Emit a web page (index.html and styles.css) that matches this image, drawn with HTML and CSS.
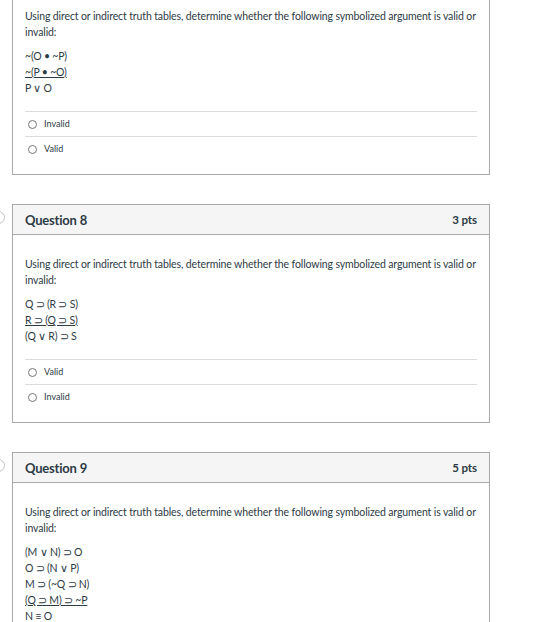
FILE: index.html
```html
<!DOCTYPE html>
<html>
<head>
<meta charset="utf-8">
<link rel="stylesheet" href="styles.css">
</head>
<body>
<div class="page">
  <div class="card card-first">
    <div class="card-body">
      <p class="prompt">Using direct or indirect truth tables, determine whether the following symbolized argument is valid or invalid:</p>
      <div class="formula">
        <div>~(O • ~P)</div>
        <div><u>~(P • ~O)</u></div>
        <div>P ∨ O</div>
      </div>
      <div class="answers">
        <label class="answer"><span class="radio"></span><span>Invalid</span></label>
        <label class="answer"><span class="radio"></span><span>Valid</span></label>
      </div>
    </div>
  </div>

  <div class="card">
    <span class="marker"></span>
    <div class="card-header">
      <span class="q-title">Question 8</span>
      <span class="q-pts">3 pts</span>
    </div>
    <div class="card-body">
      <p class="prompt">Using direct or indirect truth tables, determine whether the following symbolized argument is valid or invalid:</p>
      <div class="formula">
        <div>Q ⊃ (R ⊃ S)</div>
        <div><u>R ⊃ (Q ⊃ S)</u></div>
        <div>(Q ∨ R) ⊃ S</div>
      </div>
      <div class="answers">
        <label class="answer"><span class="radio"></span><span>Valid</span></label>
        <label class="answer"><span class="radio"></span><span>Invalid</span></label>
      </div>
    </div>
  </div>

  <div class="card">
    <span class="marker"></span>
    <div class="card-header">
      <span class="q-title">Question 9</span>
      <span class="q-pts">5 pts</span>
    </div>
    <div class="card-body">
      <p class="prompt">Using direct or indirect truth tables, determine whether the following symbolized argument is valid or invalid:</p>
      <div class="formula">
        <div>(M ∨ N) ⊃ O</div>
        <div>O ⊃ (N ∨ P)</div>
        <div>M ⊃ (~Q ⊃ N)</div>
        <div><u>(Q ⊃ M) ⊃ ~P</u></div>
        <div>N ≡ O</div>
      </div>
    </div>
  </div>
</div>
</body>
</html>
```

FILE: styles.css
```css
html, body {
  margin: 0;
  padding: 0;
  background: #fff;
}
body {
  font-family: Lato, "Liberation Sans", sans-serif;
  color: #2d3b45;
  overflow: hidden;
}
.page {
  padding: 0 53px 0 12px;
}
.card {
  position: relative;
  border: 1px solid #a9a9a9;
  background: #fff;
  margin-bottom: 29px;
}
.card-first {
  margin-top: -14px;
}
.marker {
  position: absolute;
  left: -21px;
  top: 6px;
  width: 11px;
  height: 11px;
  border: 1px solid #c4c4c4;
  border-radius: 50%;
  background: #fff;
}
.card-header {
  height: 29px;
  background: #f5f5f5;
  border-bottom: 1px solid #a9a9a9;
  display: flex;
  align-items: center;
  justify-content: space-between;
  padding: 0 12px;
}
.q-title {
  font-size: 13px;
  font-weight: 700;
  letter-spacing: -0.2px;
}
.q-pts {
  font-size: 11.5px;
  font-weight: 700;
  letter-spacing: -0.1px;
}
.card-body {
  padding: 21px 12px 13px;
  font-size: 10.5px;
  line-height: 16px;
}
.prompt {
  margin: 0 0 8px;
  letter-spacing: -0.12px;
}
.formula {
  margin: 0;
  letter-spacing: -0.2px;
}
.formula u {
  text-underline-offset: 1px;
}
.answers {
  margin-top: 15px;
}
.answer {
  display: flex;
  align-items: center;
  height: 24px;
  border-top: 1px solid #dcdcdc;
  font-size: 9px;
  padding-left: 3px;
}
.radio {
  width: 7px;
  height: 7px;
  border: 1px solid #777;
  border-radius: 50%;
  margin-right: 7px;
  box-sizing: content-box;
}
```
